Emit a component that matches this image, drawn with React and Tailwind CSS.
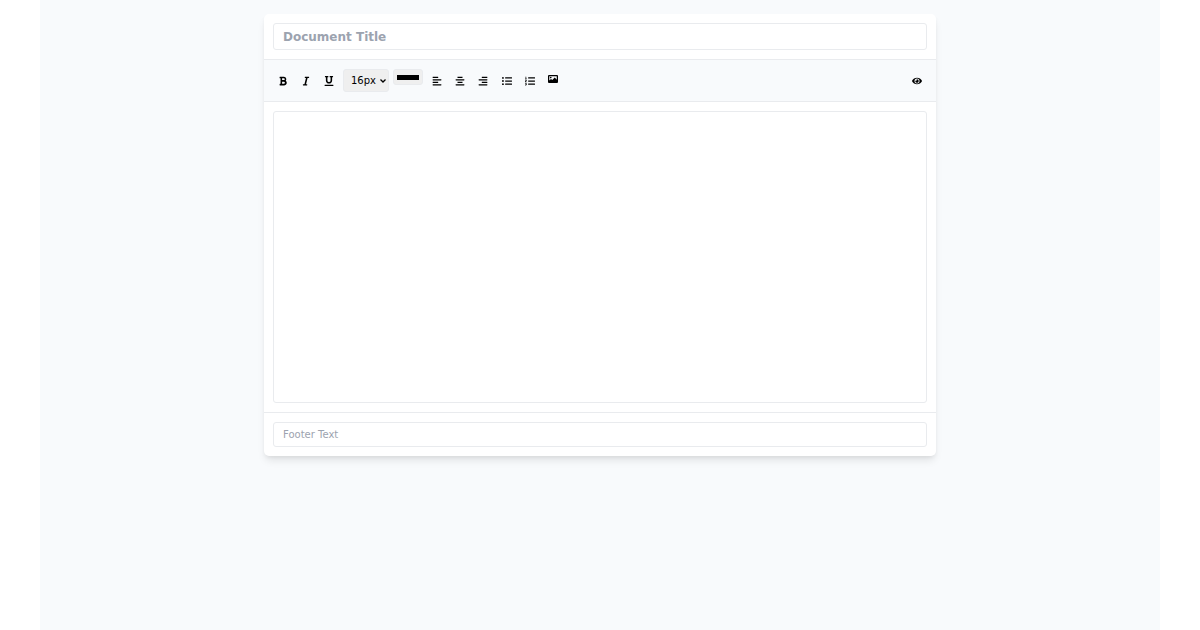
import React from "react";
import {
  FaBold,
  FaItalic,
  FaUnderline,
  FaAlignLeft,
  FaAlignCenter,
  FaAlignRight,
  FaListUl,
  FaListOl,
  FaEye,
} from "react-icons/fa";

const ToolButton = ({ label, onClick, children }) => (
  <button
    type="button"
    aria-label={label}
    onClick={onClick}
    className="flex h-[23px] w-5 items-center justify-center rounded-sm hover:bg-gray-200"
  >
    {children}
  </button>
);

const PictureIcon = () => (
  <svg viewBox="0 0 20 16" className="h-2 w-2.5" fill="currentColor">
    <path
      fillRule="evenodd"
      d="M2 0H18A2 2 0 0 1 20 2V14A2 2 0 0 1 18 16H2A2 2 0 0 1 0 14V2A2 2 0 0 1 2 0ZM2.5 2.5V11L6 8L8.5 10L13.5 5L17.5 9.5V2.5Z"
    />
    <circle cx="5.5" cy="5.2" r="1.6" />
  </svg>
);

export default function App() {
  const [title, setTitle] = React.useState("");
  const [footer, setFooter] = React.useState("");
  const [fontSize, setFontSize] = React.useState("16px");
  const [color, setColor] = React.useState("#000000");
  const [preview, setPreview] = React.useState(false);

  const format = (command) => document.execCommand(command, false);

  return (
    <div className="mx-10 min-h-screen bg-[#f8fafc] pt-3.5 font-['DejaVu_Sans',sans-serif] text-black">
      <div className="mx-auto w-3/5 rounded-[5px] bg-white shadow-[0_6px_9px_-2px_rgba(0,0,0,0.1),0_2px_4px_-1px_rgba(0,0,0,0.06)]">
        <div className="px-[9px] py-[9px]">
          <input
            type="text"
            aria-label="Document Title"
            placeholder="Document Title"
            value={title}
            onChange={(e) => setTitle(e.target.value)}
            className="block h-[27px] w-full rounded-[3px] border border-[#e9ebee] px-[9px] text-[12px] font-bold outline-none placeholder:text-[#9ca3af]"
          />
        </div>

        <div className="flex h-[43px] items-start justify-between border-y border-[#e9ebee] bg-[#f8fafc] px-[9px] pt-[9px]">
          <div className="flex items-start gap-1">
            <div className="flex items-start gap-[3px]">
              <ToolButton label="Bold" onClick={() => format("bold")}>
                <FaBold size={10} />
              </ToolButton>
              <ToolButton label="Italic" onClick={() => format("italic")}>
                <FaItalic size={10} />
              </ToolButton>
              <ToolButton label="Underline" onClick={() => format("underline")}>
                <FaUnderline size={10} />
              </ToolButton>
            </div>
            <div className="relative">
              <select
                aria-label="Font size"
                value={fontSize}
                onChange={(e) => setFontSize(e.target.value)}
                className="block h-[23px] w-[46px] appearance-none rounded-[3px] border border-[#e9ebee] bg-[#efefef] pl-[7px] text-[10px]"
              >
                <option value="12px">12px</option>
                <option value="14px">14px</option>
                <option value="16px">16px</option>
                <option value="18px">18px</option>
                <option value="24px">24px</option>
              </select>
              <svg
                viewBox="0 0 6 4"
                className="pointer-events-none absolute top-[10px] right-[3px] h-1 w-1.5"
                fill="none"
                stroke="currentColor"
                strokeWidth="1.3"
              >
                <path d="M0.5 0.5L3 3L5.5 0.5" />
              </svg>
            </div>
            <input
              type="color"
              aria-label="Text color"
              value={color}
              onChange={(e) => setColor(e.target.value)}
              className="block h-4 w-[30px] rounded-[3px] border border-[#e9ebee] bg-[#efefef] px-[3px] pt-[5px] pb-1 [&::-webkit-color-swatch]:border-0 [&::-webkit-color-swatch-wrapper]:p-0"
            />
            <div className="flex items-start gap-[3px]">
              <ToolButton label="Align left" onClick={() => format("justifyLeft")}>
                <FaAlignLeft size={10} />
              </ToolButton>
              <ToolButton label="Align center" onClick={() => format("justifyCenter")}>
                <FaAlignCenter size={10} />
              </ToolButton>
              <ToolButton label="Align right" onClick={() => format("justifyRight")}>
                <FaAlignRight size={10} />
              </ToolButton>
            </div>
            <div className="flex items-start gap-[3px]">
              <ToolButton label="Bulleted list" onClick={() => format("insertUnorderedList")}>
                <FaListUl size={10} />
              </ToolButton>
              <ToolButton label="Numbered list" onClick={() => format("insertOrderedList")}>
                <FaListOl size={10} />
              </ToolButton>
              <label className="flex h-5 w-5 cursor-pointer items-center justify-center">
                <PictureIcon />
                <input type="file" accept="image/*" aria-label="Insert image" className="hidden" />
              </label>
            </div>
          </div>
          <ToolButton label="Preview" onClick={() => setPreview(!preview)}>
            <FaEye size={10} />
          </ToolButton>
        </div>

        <div className="px-[9px] py-[9px]">
          <div
            role="textbox"
            aria-label="Document body"
            aria-multiline="true"
            contentEditable={!preview}
            suppressContentEditableWarning
            style={{ fontSize, color }}
            className="min-h-[292px] rounded-[3px] border border-[#e9ebee] p-[9px] outline-none"
          />
        </div>

        <div className="border-t border-[#e9ebee] px-[9px] py-[9px]">
          <input
            type="text"
            aria-label="Footer Text"
            placeholder="Footer Text"
            value={footer}
            onChange={(e) => setFooter(e.target.value)}
            className="block h-[25px] w-full rounded-[3px] border border-[#e9ebee] px-[9px] text-[10px] outline-none placeholder:text-[#9ca3af]"
          />
        </div>
      </div>
    </div>
  );
}
